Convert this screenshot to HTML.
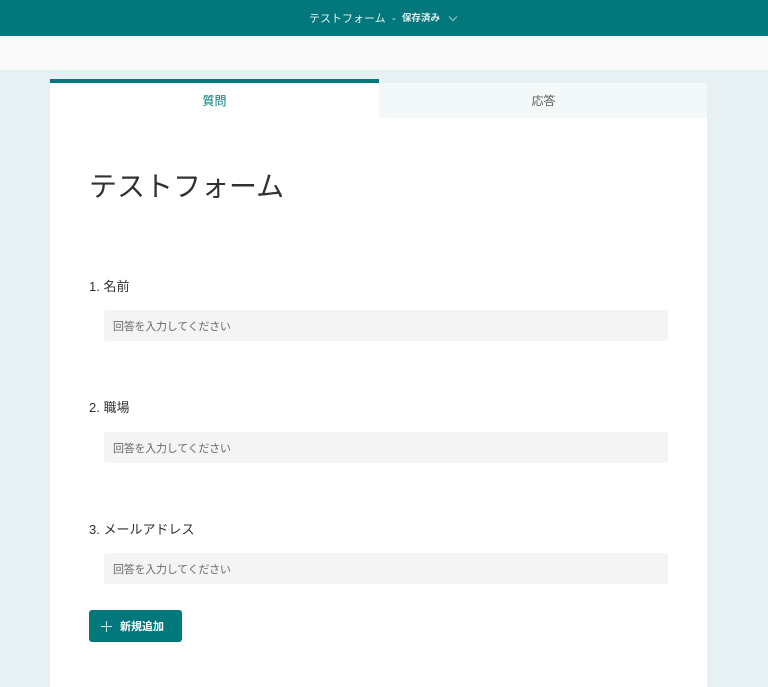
<!DOCTYPE html>
<html lang="ja">
<head>
<meta charset="utf-8">
<style>
html,body{margin:0;padding:0}
body{width:768px;height:687px;overflow:hidden;position:relative;background:#e7f1f4;font-family:"Liberation Sans","Noto Sans CJK JP",sans-serif;color:#323130}
.a{position:absolute;white-space:nowrap}
.input{position:absolute;left:104px;width:564px;height:31px;background:#f4f4f4;border-radius:3px;font-size:11px;letter-spacing:-.25px;line-height:33px;color:#6b6967;text-indent:9px}
.input span{position:relative;top:1px}
.q{position:absolute;left:89px;font-size:13px;line-height:20px;color:#323130}
</style>
</head>
<body>
<div class="a" style="left:0;top:0;width:768px;height:36px;background:#03787c"></div>
<div class="a" style="left:309px;top:10px;font-size:11px;line-height:18px;color:#e4f1f1">テストフォーム</div>
<div class="a" style="left:392px;top:10px;font-size:11px;line-height:18px;color:#e4f1f1">-</div>
<div class="a" style="left:402px;top:11px;font-size:9.5px;line-height:16px;font-weight:bold;color:#e4f1f1">保存済み</div>
<svg class="a" style="left:448px;top:15px" width="10" height="8" viewBox="0 0 10 8"><path d="M1 1.5L5 5.5L9 1.5" fill="none" stroke="#9cc9ca" stroke-width="1"/></svg>
<div class="a" style="left:0;top:36px;width:768px;height:34px;background:#faf9f9"></div>

<div class="a" style="left:50px;top:83px;width:657px;height:604px;background:#fff"></div>
<div class="a" style="left:50px;top:79px;width:329px;height:4px;background:#03787c"></div>
<div class="a" style="left:379px;top:83px;width:328px;height:35px;background:#f3f9f9"></div>
<div class="a" style="left:50px;top:92px;width:329px;text-align:center;font-size:12px;line-height:18px;color:#03787c">質問</div>
<div class="a" style="left:379px;top:92px;width:329px;text-align:center;font-size:12px;line-height:18px;color:#605e5c">応答</div>

<div class="a" style="left:89px;top:166px;font-size:28px;line-height:42px;font-weight:400;color:#323130">テストフォーム</div>

<div class="q" style="top:277px">1. 名前</div>
<div class="input" style="top:310px"><span>回答を入力してください</span></div>
<div class="q" style="top:398px">2. 職場</div>
<div class="input" style="top:432px"><span>回答を入力してください</span></div>
<div class="q" style="top:520px">3. メールアドレス</div>
<div class="input" style="top:553px"><span>回答を入力してください</span></div>

<div class="a" style="left:89px;top:610px;width:93px;height:31.5px;background:#03787c;border-radius:3px"></div>
<svg class="a" style="left:101px;top:621px" width="11" height="11" viewBox="0 0 11 11"><path d="M5.5 0V11M0 5.5H11" fill="none" stroke="#d5e9ea" stroke-width="1"/></svg>
<div class="a" style="left:120px;top:619px;font-size:11px;line-height:16px;font-weight:bold;color:#fff">新規追加</div>
</body>
</html>
